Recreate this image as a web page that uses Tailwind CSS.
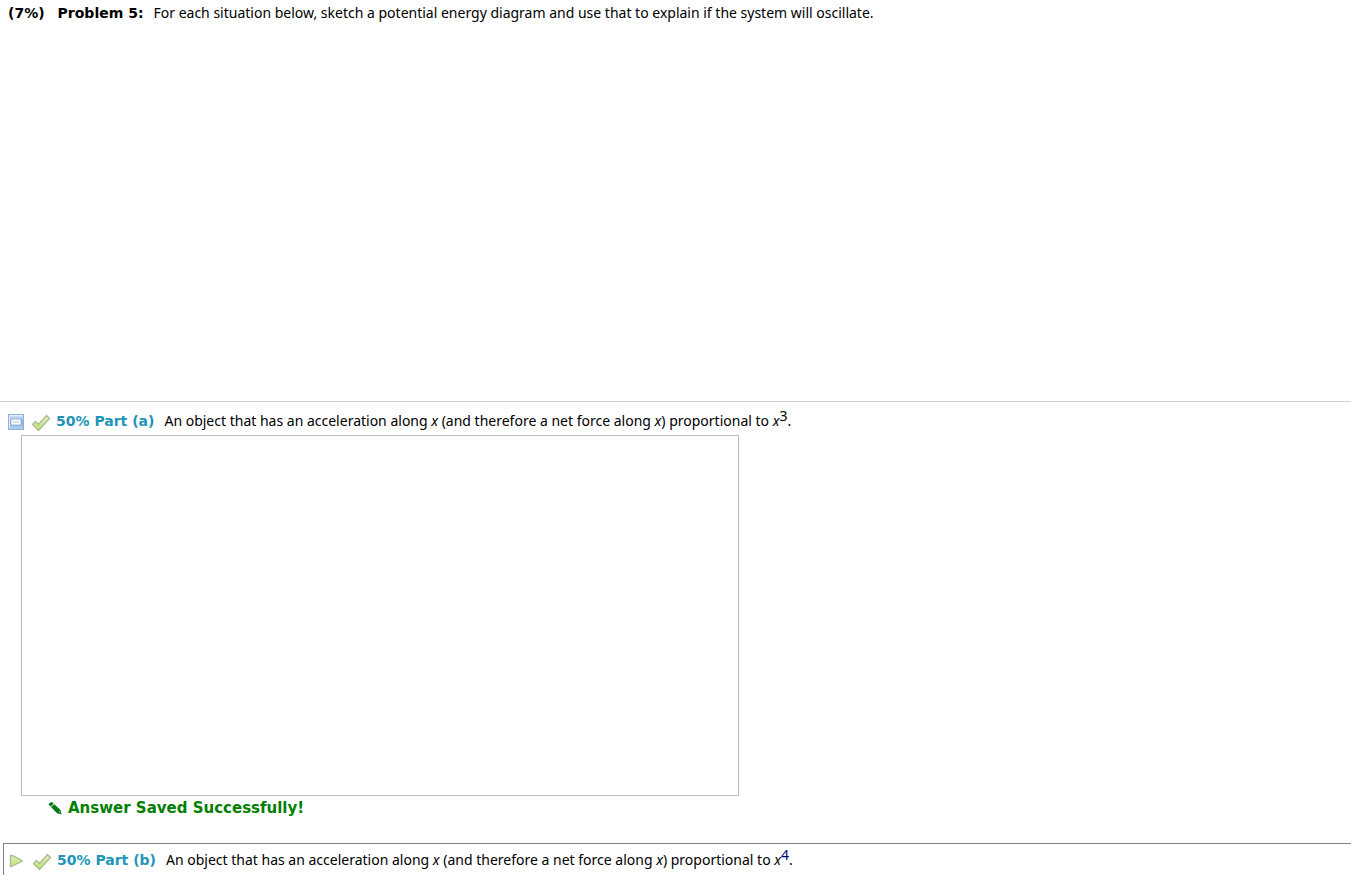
<!DOCTYPE html>
<html lang="en">
<head>
<meta charset="utf-8">
<title>Problem 5</title>
<script src="https://cdn.jsdelivr.net/npm/@tailwindcss/browser@4"></script>
</head>
<body class="min-h-screen overflow-hidden bg-white font-['Noto_Sans',sans-serif] text-[14px] leading-6 text-black">
<svg class="absolute size-0" aria-hidden="true">
  <defs>
    <linearGradient id="green" x1="0" y1="0" x2="0" y2="1"><stop offset="0" stop-color="#e4edc4"/><stop offset="1" stop-color="#bfe36c"/></linearGradient>
    <linearGradient id="blue" x1="0" y1="0" x2="0" y2="1"><stop offset="0" stop-color="#dce9f8"/><stop offset=".5" stop-color="#8fb2de"/><stop offset="1" stop-color="#b3d3f4"/></linearGradient>
    <symbol id="check" viewBox="0 0 20 18"><path d="M1.5 10.5 4.5 7.5 7.5 10.5 15.5 1.5 18.5 4.5 7.5 16.5Z" fill="url(#green)" stroke="#a9bb92" stroke-width="1.3" stroke-linejoin="round"/></symbol>
  </defs>
</svg>
<header class="flex h-[401px] items-start pl-2">
  <h1 class="flex items-baseline pt-px"><b class="mr-[13px] font-['DejaVu_Sans',sans-serif]">(7%)</b><b class="mr-[10px] font-['DejaVu_Sans',sans-serif]">Problem 5:</b><span>For each situation below, sketch a potential energy diagram and use that to explain if the system will oscillate.</span></h1>
</header>
<main>
  <section class="border-t border-[#d3d3d3] pt-[7px]">
    <div class="flex h-[26px] items-start pl-2">
      <button type="button" aria-label="Collapse part a" class="mt-[5px] mr-[7px] size-4">
        <svg viewBox="0 0 16 16" class="size-4"><rect x=".5" y=".5" width="15" height="15" fill="url(#blue)" stroke="#93afd2"/><path d="M1.5 14V1.5H14" fill="none" stroke="#e4effb"/><rect x="3" y="5" width="10" height="6" rx="1.5" fill="#fff" stroke="#7fa1cf" stroke-width=".8"/><path d="M5 8h6" stroke="#a9c0e0"/></svg>
      </button>
      <svg class="mt-[5px] mr-[5px] h-[18px] w-5" role="img" aria-label="Correct"><use href="#check"/></svg>
      <b class="mr-[10px] font-['DejaVu_Sans',sans-serif] text-[#2195b8]">50% Part (a)</b>
      <p>An object that has an acceleration along <i>x</i> (and therefore a net force along <i>x</i>) proportional to <i>x</i><sup class="top-[-5px] text-[14px]">3</sup>.</p>
    </div>
    <div class="mx-[21px] h-[361px] max-w-[718px] border border-[#bebebe]"></div>
    <p class="flex h-[47px] items-start pl-12 font-['DejaVu_Sans',sans-serif] text-[15px] leading-6 font-bold text-[#008000]">
      <svg viewBox="0 0 14 14" class="mt-[5px] mr-[6px] size-[14px]" fill="#007a14"><path d="M.5 3.5Q1.5 1 4 1L5.7 2.8 2.5 5.5ZM3 6 6.3 3.2 12.5 9 13.5 13.5 9 12.3Z"/><path d="m10.8 11 1.4-1 .5 2.4Z" fill="#87b98d"/></svg>
      Answer Saved Successfully!
    </p>
  </section>
  <section class="ml-[3px] border-t border-l border-[#808080] pt-1">
    <div class="flex h-[27px] items-start pl-[5px]">
      <button type="button" aria-label="Expand part b" class="mt-[5px] mr-[7px] size-4">
        <svg viewBox="0 0 16 16" class="size-4"><path d="M1.5 2.5Q5 2.5 13.5 8L2.5 13.5H1.5Z" fill="url(#green)" stroke="#a9bb92" stroke-width="1.3" stroke-linejoin="round"/></svg>
      </button>
      <svg class="mt-[5px] mr-[5px] h-[18px] w-5" role="img" aria-label="Correct"><use href="#check"/></svg>
      <b class="mr-[10px] font-['DejaVu_Sans',sans-serif] text-[#2195b8]">50% Part (b)</b>
      <p>An object that has an acceleration along <i>x</i> (and therefore a net force along <i>x</i>) proportional to <i>x</i><sup class="top-[-5px] text-[14px] text-[#000080]">4</sup>.</p>
    </div>
  </section>
</main>
</body>
</html>
